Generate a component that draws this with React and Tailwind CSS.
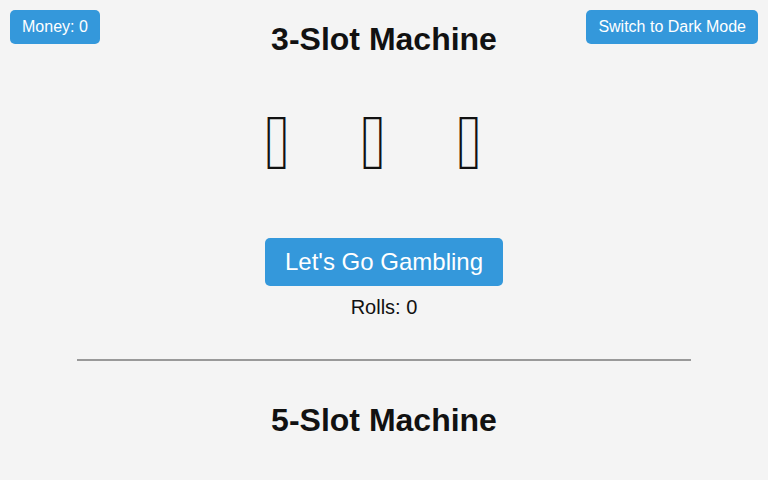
import { useState } from "react";

const symbols = ["\uE000", "\uE001", "\uE002", "\uE003", "\uE004"];

function SlotMachine({ title, spins, onSpin, reels, className = "" }) {
  return (
    <section className={"flex flex-col items-center " + className}>
      <h1 className="text-[32px] leading-[37px] font-bold text-[#111]">{title}</h1>
      {reels && (
        <>
          <div className="mt-[40px] flex h-[90px] items-center gap-[36px] pl-[10px] font-['Noto_Color_Emoji'] text-[44px] text-[#111]">
            {reels.map((s, i) => (
              <span key={i} className="w-[60px] text-center">
                {s}
              </span>
            ))}
          </div>
          <button
            type="button"
            onClick={onSpin}
            className="mt-[50px] rounded-[5px] bg-[#3498db] px-[20px] py-[10px] text-[24px] leading-[28px] text-white"
          >
            Let's Go Gambling
          </button>
          <p className="mt-[10px] text-[20px] leading-[23px] text-[#111]">Rolls: {spins}</p>
        </>
      )}
    </section>
  );
}

export default function App() {
  const [money, setMoney] = useState(0);
  const [rolls, setRolls] = useState(0);
  const [dark, setDark] = useState(false);
  const [reels, setReels] = useState(["\uE000", "\uE000", "\uE000"]);

  // spin the three reels
  const spin = () => {
    const next = reels.map(() => symbols[Math.floor(Math.random() * symbols.length)]);
    setReels(next);
    setRolls(rolls + 1);
    if (next[0] === next[1] && next[1] === next[2]) setMoney(money + 10);
  };

  return (
    <div className="relative min-h-[480px] bg-[#f4f4f4] font-['Liberation_Sans',Arial,sans-serif]">
      <button
        type="button"
        className="absolute left-[10px] top-[10px] rounded-[5px] bg-[#3498db] px-[12px] py-[7px] text-[16px] leading-[20px] text-white"
      >
        Money: {money}
      </button>
      <button
        type="button"
        onClick={() => setDark(!dark)}
        className="absolute right-[10px] top-[10px] rounded-[5px] bg-[#3498db] px-[12px] py-[7px] text-[16px] leading-[20px] text-white"
      >
        {dark ? "Switch to Light Mode" : "Switch to Dark Mode"}
      </button>

      <SlotMachine title="3-Slot Machine" reels={reels} spins={rolls} onSpin={spin} className="pt-[21px]" />

      <hr className="mx-auto mt-[40px] w-[80%] border-t-2 border-[#999]" />

      <SlotMachine title="5-Slot Machine" className="pt-[41px]" />
    </div>
  );
}
